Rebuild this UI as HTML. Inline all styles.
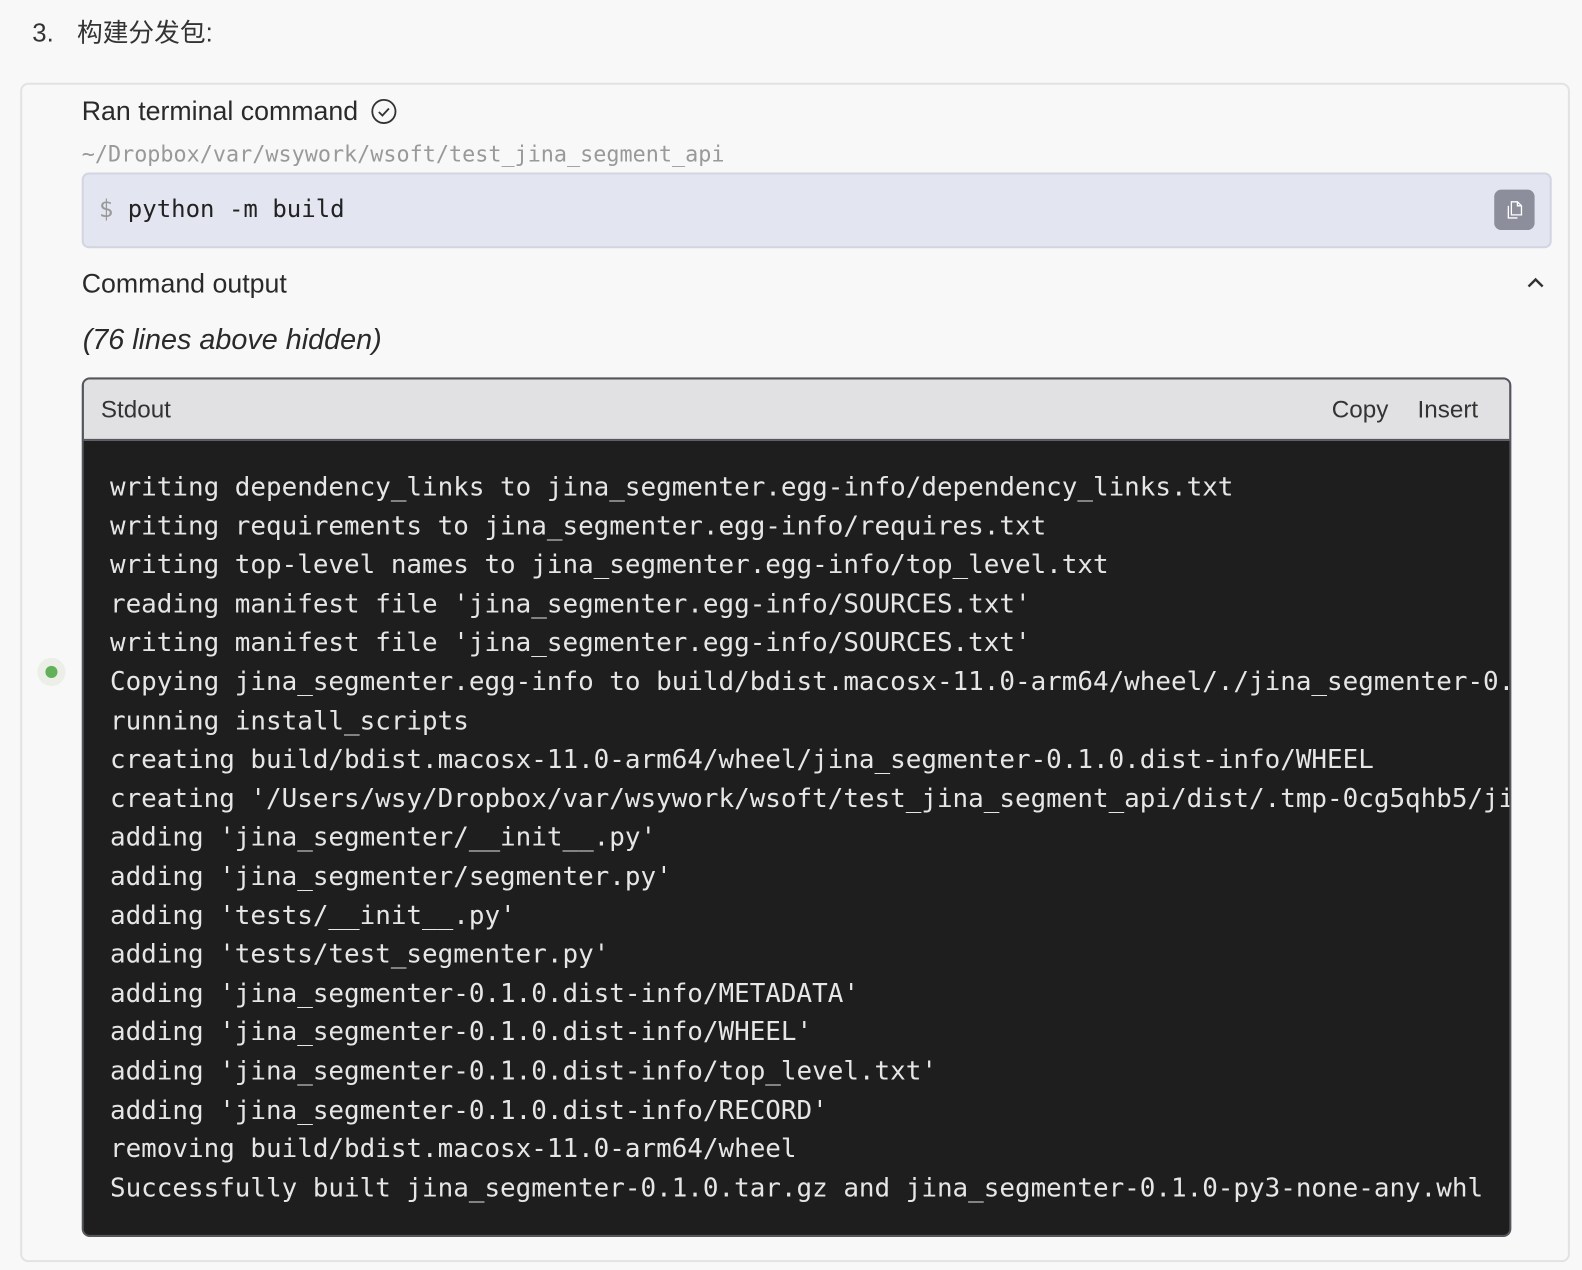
<!DOCTYPE html>
<html><head><meta charset="utf-8"><style>
*{box-sizing:border-box;margin:0;padding:0}
body{width:1582px;height:1270px;background:#f8f8f8;font-family:"Liberation Sans","Noto Sans CJK SC",sans-serif;color:#2a2a2a;overflow:hidden}
#w{position:relative;width:1568px;height:1259px;transform:scale(1.00893);transform-origin:0 0}
.abs{position:absolute}
.card{left:20px;top:82px;width:1536px;height:1169px;border:2px solid #e2e2e2;border-radius:8px;background:#f8f8f8}
.cmd{left:81px;top:171px;width:1457px;height:75px;background:#e3e5f1;border:2px solid #d3d5e0;border-radius:7px}
.out{left:81px;top:374px;width:1417px;height:852px;background:#1e1e1e;border:2px solid #55565d;border-radius:8px;overflow:hidden}
.hdr{left:0;top:0;width:100%;height:61px;background:#e1e1e3;border-bottom:2px solid #55565d}
pre{position:absolute;left:26px;top:88px;font-size:25.7px;line-height:38.6px;color:#e6e6e6;white-space:pre;font-family:"DejaVu Sans Mono","Liberation Mono",monospace}
</style></head><body><div id="w">
<div class="abs" style="left:32px;top:12px;font-size:25.5px;color:#333">3.<span style="display:inline-block;width:23px"></span>构建分发包:</div>
<div class="abs card"></div>
<div class="abs" style="left:37px;top:652px;width:28px;height:28px;border-radius:50%;background:#ecefe8"></div>
<div class="abs" style="left:45px;top:660px;width:12px;height:12px;border-radius:50%;background:#62b05a"></div>
<div class="abs" style="left:81px;top:95px;font-size:26.5px;color:#2a2a2a">Ran terminal command</div>
<svg class="abs" style="left:367px;top:97px" width="27" height="27" viewBox="0 0 27 27"><circle cx="13.5" cy="13.5" r="11.5" fill="none" stroke="#333" stroke-width="1.8"/><path d="M8.5 14l3.5 3.5 6.5-7" fill="none" stroke="#333" stroke-width="1.8"/></svg>
<div class="abs" style="left:81px;top:141px;font-size:21.6px;color:#999;font-family:'DejaVu Sans Mono',monospace">~/Dropbox/var/wsywork/wsoft/test_jina_segment_api</div>
<div class="abs cmd"></div>
<div class="abs" style="left:98px;top:193px;font-size:23.8px;font-family:'DejaVu Sans Mono',monospace;color:#222"><span style="color:#999">$</span> python -m build</div>
<div class="abs" style="left:1481px;top:188px;width:40px;height:40px;border-radius:7px;background:#8c8f9b"></div>
<svg class="abs" style="left:1481px;top:188px" width="40" height="40" viewBox="0 0 40 40"><path d="M17 12h6l4 4v9h-10z M23 12v4h4" fill="none" stroke="#fff" stroke-width="1.3"/><path d="M14 16v12h9" fill="none" stroke="#fff" stroke-width="1.3"/></svg>
<div class="abs" style="left:81px;top:266px;font-size:26.5px;color:#2a2a2a">Command output</div>
<svg class="abs" style="left:1512px;top:273px" width="20" height="14" viewBox="0 0 20 14"><path d="M3 11l7-7 7 7" fill="none" stroke="#333" stroke-width="2.4"/></svg>
<div class="abs" style="left:82px;top:321px;font-size:28.5px;font-style:italic;color:#2a2a2a">(76 lines above hidden)</div>
<div class="abs out">
<div class="abs hdr"></div>
<div class="abs" style="left:17px;top:17px;font-size:24px;color:#333">Stdout</div>
<div class="abs" style="left:1237px;top:17px;font-size:24px;color:#333">Copy</div>
<div class="abs" style="left:1322px;top:17px;font-size:24px;color:#333">Insert</div>
<pre>writing dependency_links to jina_segmenter.egg-info/dependency_links.txt
writing requirements to jina_segmenter.egg-info/requires.txt
writing top-level names to jina_segmenter.egg-info/top_level.txt
reading manifest file 'jina_segmenter.egg-info/SOURCES.txt'
writing manifest file 'jina_segmenter.egg-info/SOURCES.txt'
Copying jina_segmenter.egg-info to build/bdist.macosx-11.0-arm64/wheel/./jina_segmenter-0.1.0-py3.11.egg-info
running install_scripts
creating build/bdist.macosx-11.0-arm64/wheel/jina_segmenter-0.1.0.dist-info/WHEEL
creating '/Users/wsy/Dropbox/var/wsywork/wsoft/test_jina_segment_api/dist/.tmp-0cg5qhb5/jina_segmenter-0.1.0'
adding 'jina_segmenter/__init__.py'
adding 'jina_segmenter/segmenter.py'
adding 'tests/__init__.py'
adding 'tests/test_segmenter.py'
adding 'jina_segmenter-0.1.0.dist-info/METADATA'
adding 'jina_segmenter-0.1.0.dist-info/WHEEL'
adding 'jina_segmenter-0.1.0.dist-info/top_level.txt'
adding 'jina_segmenter-0.1.0.dist-info/RECORD'
removing build/bdist.macosx-11.0-arm64/wheel
Successfully built jina_segmenter-0.1.0.tar.gz and jina_segmenter-0.1.0-py3-none-any.whl</pre>
</div>
</div></body></html>
